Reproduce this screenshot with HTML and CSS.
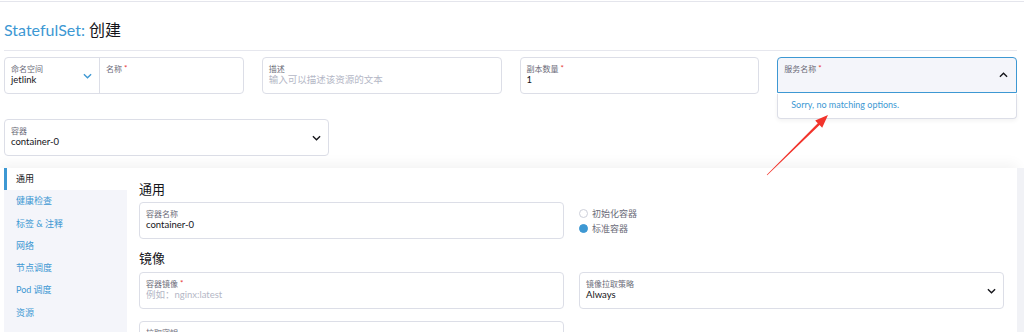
FILE: index.html
```html
<!DOCTYPE html>
<html lang="zh-CN">
<head>
  <meta charset="UTF-8" />
  <meta name="viewport" content="width=device-width, initial-scale=1.0"/>
  <title>StatefulSet: 创建</title>
  <link rel="stylesheet" href="styles.css">
</head>
<body>

  <div class="topline"></div>

  <div class="page">
    <h1 class="title"><span class="kind">StatefulSet:</span> 创建</h1>

    <div class="row-top">
      <div class="field split">
        <div class="ns">
          <div class="text">
            <div class="label">命名空间</div>
            <div class="value">jetlink</div>
          </div>
          <svg class="chev blue" viewBox="0 0 10 6"><polyline points="1,1 5,5 9,1"/></svg>
        </div>
        <div class="name">
          <div class="text">
            <div class="label">名称<span class="req">*</span></div>
          </div>
        </div>
      </div>

      <div class="field">
        <div class="text">
          <div class="label">描述</div>
          <div class="value placeholder">输入可以描述该资源的文本</div>
        </div>
      </div>

      <div class="field">
        <div class="text">
          <div class="label">副本数量<span class="req">*</span></div>
          <div class="value">1</div>
        </div>
      </div>

      <div class="select-wrap">
        <div class="field focused">
          <div class="text">
            <div class="label">服务名称<span class="req">*</span></div>
          </div>
          <svg class="chev" viewBox="0 0 10 6"><polyline points="1,5 5,1 9,5"/></svg>
        </div>
        <div class="dropdown">Sorry, no matching options.</div>
      </div>
    </div>

    <div class="field container-select">
      <div class="text">
        <div class="label">容器</div>
        <div class="value">container-0</div>
      </div>
      <svg class="chev" viewBox="0 0 10 6"><polyline points="1,1 5,5 9,1"/></svg>
    </div>
  </div>

  <div class="panel-row">
    <div class="panel">
      <ul class="tabs">
        <li class="active">通用</li>
        <li>健康检查</li>
        <li>标签 &amp; 注释</li>
        <li>网络</li>
        <li>节点调度</li>
        <li>Pod 调度</li>
        <li>资源</li>
      </ul>

      <div class="tab-body">
        <h3>通用</h3>
        <div class="grid">
          <div class="field">
            <div class="text">
              <div class="label">容器名称</div>
              <div class="value">container-0</div>
            </div>
          </div>
          <div class="radios">
            <label class="radio"><span class="dot"></span>初始化容器</label>
            <label class="radio"><span class="dot checked"></span>标准容器</label>
          </div>
        </div>

        <h3 class="second">镜像</h3>
        <div class="grid">
          <div class="field">
            <div class="text">
              <div class="label">容器镜像<span class="req">*</span></div>
              <div class="value placeholder">例如：nginx:latest</div>
            </div>
          </div>
          <div class="field">
            <div class="text">
              <div class="label">镜像拉取策略</div>
              <div class="value">Always</div>
            </div>
            <svg class="chev" viewBox="0 0 10 6"><polyline points="1,1 5,5 9,1"/></svg>
          </div>
          <div class="field">
            <div class="text">
              <div class="label">拉取密钥</div>
            </div>
          </div>
        </div>
      </div>
    </div>
    <div class="strip"></div>
  </div>

  <!-- annotation arrow -->
  <svg class="arrow" viewBox="0 0 1024 332">
    <polygon points="766.8,174.8 817.8,123.2 815.2,120.5 828,115 822.2,127.7 819.6,125 767.2,175.2"/>
  </svg>

</body>
</html>
```

FILE: styles.css
```css
body {
  margin: 0;
  font-family: Lato, "Noto Sans CJK SC", sans-serif;
  background: #fff;
  color: #141419;
  position: relative;
  height: 332px;
  overflow: hidden;
}

.topline {
  height: 1px;
  border-bottom: 1px solid #e4e5ec;
}

.page {
  padding: 0 7px 0 4px;
}

.title {
  margin: 0;
  box-sizing: border-box;
  height: 49px;
  padding-top: 18px;
  line-height: 20px;
  font-size: 16px;
  font-weight: normal;
  border-bottom: 1px solid #e6e7ee;
}

.title .kind {
  color: #3d98d3;
}

.row-top {
  display: grid;
  grid-template-columns: repeat(4, 1fr);
  gap: 18px;
  margin-top: 6px;
}

.field {
  box-sizing: border-box;
  height: 37px;
  border: 1px solid #dcdee7;
  border-radius: 4px;
  display: flex;
  align-items: center;
  padding: 0 7px 0 6px;
  background: #fff;
}

.text {
  flex: 1;
  align-self: stretch;
  padding-top: 6px;
  min-width: 0;
}

.label {
  font-size: 8px;
  line-height: 10px;
  color: #6b6b78;
  white-space: nowrap;
}

.req {
  color: #e83535;
  margin-left: 2px;
  font-size: 8px;
  position: relative;
  top: -1px;
}

.value {
  font-size: 9.5px;
  line-height: 12px;
  color: #141419;
  white-space: nowrap;
}

.placeholder {
  color: #b4b7c6;
}

.chev {
  width: 9px;
  height: 6px;
  flex: none;
  fill: none;
  stroke: #141419;
  stroke-width: 1.5;
}

.chev.blue {
  stroke: #3d98d3;
}

/* namespace + name combined box */
.split {
  padding: 0;
}

.split .ns {
  width: 95px;
  height: 100%;
  box-sizing: border-box;
  display: flex;
  align-items: center;
  padding: 0 7px 0 6px;
  border-right: 1px solid #dcdee7;
}

.split .name {
  flex: 1;
  height: 100%;
  display: flex;
  padding: 0 6px;
}

.select-wrap {
  position: relative;
}

.field.focused {
  height: 36px;
  background: #f4f5fa;
  border-color: #3d98d3;
  border-radius: 4px 4px 0 0;
  padding-right: 8px;
}

.dropdown {
  position: absolute;
  top: 100%;
  left: 0;
  right: 0;
  box-sizing: border-box;
  height: 25px;
  padding: 5px 0 0 13px;
  font-size: 9px;
  line-height: 12px;
  color: #3d98d3;
  background: #fff;
  border: 1px solid #dcdee7;
  border-top: none;
  border-radius: 0 0 4px 4px;
  box-shadow: 0 2px 4px rgba(0,0,0,0.05);
}

.container-select {
  width: 325px;
  margin-top: 25px;
  padding-right: 7px;
}

.panel-row {
  display: flex;
  margin-top: 12px;
}

.panel {
  flex: 1;
  display: flex;
  background: #fff;
  padding-left: 4px;
  box-shadow: 0 -4px 12px rgba(0,0,0,0.05);
  height: 200px;
}

.strip {
  width: 7px;
  background: #f1f2f6;
}

.tabs {
  list-style: none;
  margin: 0;
  padding: 0;
  width: 123px;
  background: #f4f5fa;
}

.tabs li {
  height: 22.3px;
  line-height: 22.3px;
  padding-left: 12px;
  font-size: 9px;
  color: #3d98d3;
}

.tabs li.active {
  background: #fff;
  color: #141419;
  border-left: 3px solid #3d98d3;
  padding-left: 9px;
}

.tab-body {
  flex: 1;
  padding: 13px 13px 0 12px;
}

.tab-body h3 {
  margin: 0 0 5px;
  font-size: 13px;
  line-height: 16px;
  font-weight: normal;
  color: #141419;
}

.tab-body h3.second {
  margin: 11px 0 6px;
}

.grid {
  display: grid;
  grid-template-columns: 1fr 1fr;
  column-gap: 15px;
  row-gap: 12px;
}

.radios {
  display: flex;
  flex-direction: column;
  padding-top: 4px;
}

.radio {
  display: flex;
  align-items: center;
  gap: 4px;
  height: 15px;
  font-size: 9px;
  color: #6b6b78;
}

.dot {
  box-sizing: border-box;
  width: 9px;
  height: 9px;
  border-radius: 50%;
  border: 1px solid #cdd0da;
  background: #fff;
}

.dot.checked {
  border-color: #3d98d3;
  background: #3d98d3;
}

.arrow {
  position: absolute;
  left: 0;
  top: 0;
  width: 1024px;
  height: 332px;
  pointer-events: none;
  fill: #f2342c;
}
```
